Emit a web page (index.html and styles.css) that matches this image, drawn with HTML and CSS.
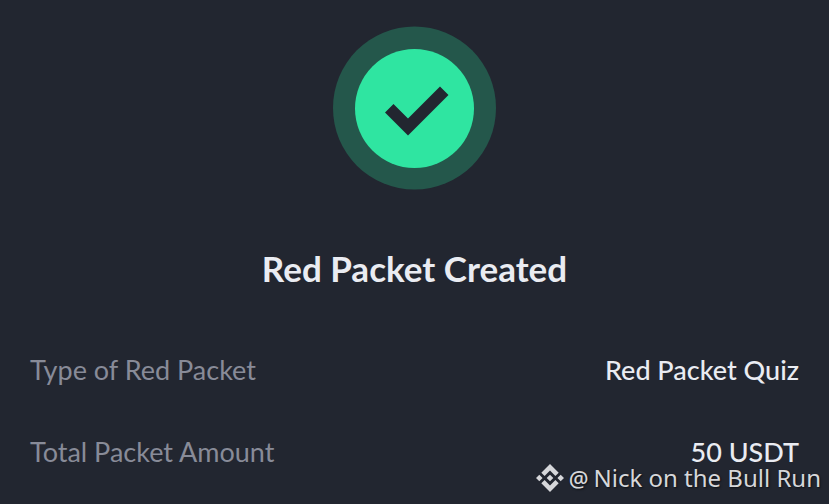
FILE: index.html
```
<!DOCTYPE html>
<html lang="en">
<head>
    <meta charset="UTF-8">
    <meta name="viewport" content="width=device-width, initial-scale=1.0">
    <title>Red Packet Created</title>
    <link rel="stylesheet" href="styles.css">
</head>
<body>
    <main class="result">
        <svg class="success-icon" viewBox="0 0 164 164" aria-hidden="true">
            <circle cx="81.500" cy="82" r="81.500" fill="#24574b"/>
            <circle cx="81.500" cy="82.500" r="59.500" fill="#2fe5a1"/>
            <path d="M60.500 78l-8.500 8.500L75 109.500 115.500 69l-8.500-8.500-32 32z" fill="#222630"/>
        </svg>

        <h1>Red Packet Created</h1>

        <dl class="details">
            <div class="row">
                <dt>Type of Red Packet</dt>
                <dd>Red Packet Quiz</dd>
            </div>
            <div class="row">
                <dt>Total Packet Amount</dt>
                <dd>50 USDT</dd>
            </div>
        </dl>
    </main>

    <!-- Author tag over the bottom corner -->
    <div class="watermark">
        <svg class="watermark-logo" viewBox="0 0 28 28" aria-hidden="true">
            <path d="M14 0l8.700 8.700-3.300 3.300L14 6.600 8.600 12 5.300 8.700zM14 28l8.700-8.700-3.300-3.300L14 21.400 8.600 16l-3.300 3.300zM3.300 10.700L6.600 14l-3.300 3.300L0 14zM24.700 10.700L28 14l-3.300 3.300-3.300-3.300zM14 10.700l3.300 3.300-3.300 3.300-3.300-3.300z"/>
        </svg>
        <span class="at">@</span>
        <span>Nick on the Bull Run</span>
    </div>
</body>
</html>
```
FILE: styles.css
```
* {
    margin: 0;
    padding: 0;
    box-sizing: border-box;
}

body {
    position: relative;
    min-height: 100vh;
    font-family: Lato, sans-serif;
    background: #222630;
    color: #eaecf2;
}

.result {
    display: flex;
    flex-direction: column;
    align-items: center;
    padding: 26px 30px 0;
}

.success-icon {
    width: 164px;
    height: 164px;
}

h1 {
    margin-top: 58px;
    font-size: 35px;
    line-height: 40px;
    font-weight: 700;
    text-align: center;
}

.details {
    width: 100%;
    margin-top: 66px;
}

.row {
    display: flex;
    justify-content: space-between;
    gap: 20px;
    margin-bottom: 50px;
    font-size: 27px;
    line-height: 32px;
}

.row:last-child {
    margin-bottom: 0;
}

.row dt {
    color: #888b98;
}

.row dd {
    font-weight: 500;
    text-align: right;
}

/* Author tag */
.watermark {
    position: absolute;
    right: 8px;
    bottom: 10px;
    display: flex;
    align-items: center;
    gap: 5px;
    font-family: "Noto Sans", sans-serif;
    font-size: 24px;
    line-height: 32px;
    color: #d6d7da;
    text-shadow: 1px 1px 2px rgba(0, 0, 0, 0.6);
}

.watermark-logo {
    width: 28px;
    height: 28px;
    fill: #d6d7da;
}

.at {
    font-size: 22px;
    font-weight: 500;
}
```
